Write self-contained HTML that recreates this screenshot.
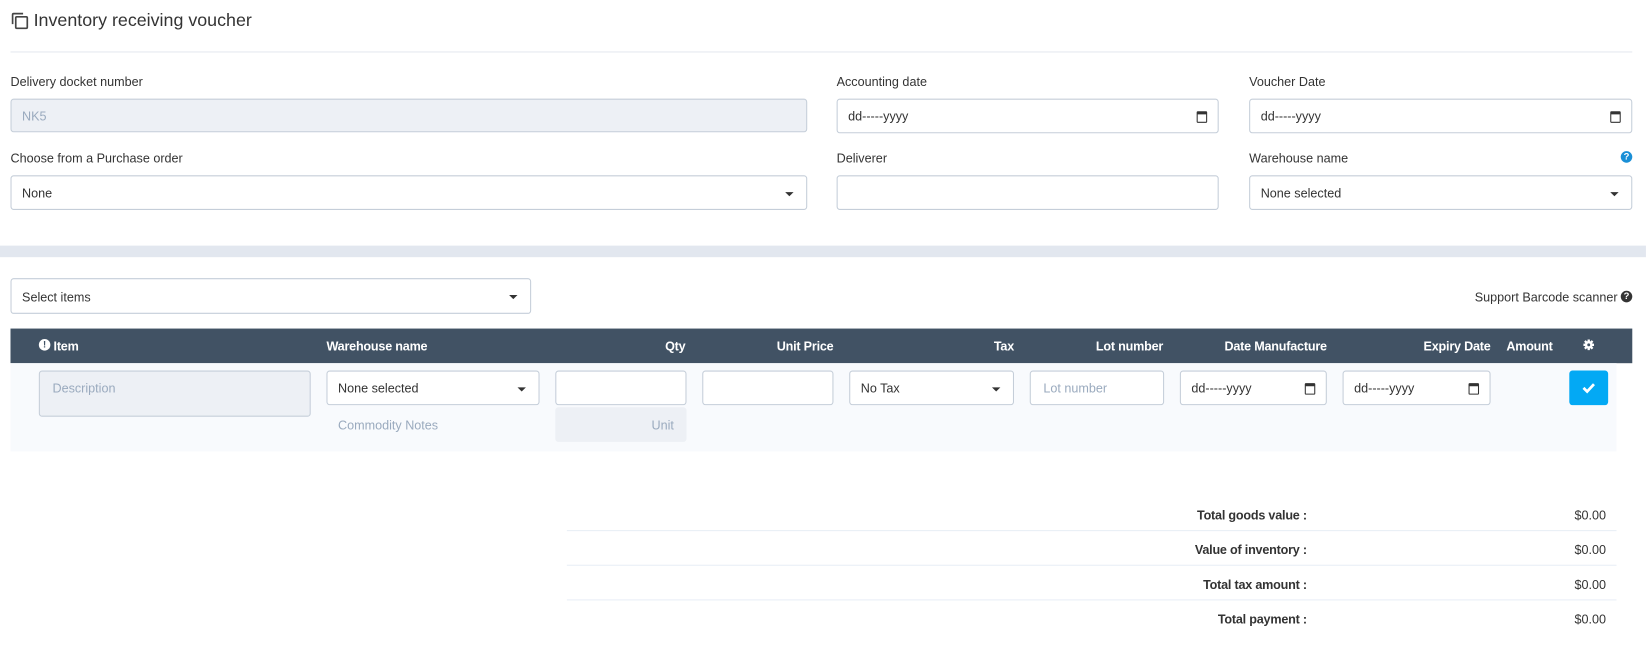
<!DOCTYPE html>
<html><head><meta charset="utf-8"><style>
html,body{margin:0;padding:0;background:#fff;width:1646px;height:667px;overflow:hidden}
#w{position:absolute;left:0;top:0;width:1568px;height:636px;transform:scale(1.0497);transform-origin:0 0;font-family:"Liberation Sans",sans-serif;font-size:12px;color:#333}
.a{position:absolute}
.in{position:absolute;box-sizing:border-box;border:1px solid #c5ced9;border-radius:3px;background:#fff;height:33px;line-height:33px;padding-left:10px;color:#333}
.dis{background:#edf0f5;color:#9aaabe}
.car{position:absolute;right:12px;top:15px;width:0;height:0;border-left:4px solid transparent;border-right:4px solid transparent;border-top:4px solid #333}
.cal{position:absolute;right:10px;top:11px;width:8px;height:7px;border:1.5px solid #333;border-top-width:3px;border-radius:1px}
.lbl{position:absolute;font-size:12px;color:#333}
.th{position:absolute;top:323px;color:#fff;font-weight:bold;font-size:12px;letter-spacing:-0.2px}
.tl{position:absolute;width:300px;text-align:right;font-weight:bold;color:#333;left:945px;letter-spacing:-0.2px}
.tv{position:absolute;width:100px;text-align:right;left:1430px;color:#333}
.ln{position:absolute;left:540px;width:1000px;height:1px;background:#e8eef6}
.ph{color:#9aaabe}
</style></head><body><div id="w">
<svg class="a" style="left:10px;top:11px" width="18" height="18" viewBox="0 0 18 18"><path d="M2 12V3a1 1 0 0 1 1-1h9" fill="none" stroke="#444" stroke-width="1.6"/><rect x="5" y="5" width="11" height="11" rx="1" fill="none" stroke="#444" stroke-width="1.6"/></svg>
<div class="a" style="left:32px;top:10px;font-size:17px;color:#333">Inventory receiving voucher</div>
<div class="a" style="left:10px;top:49px;width:1545px;height:1px;background:#e5e9ef"></div>

<div class="lbl" style="left:10px;top:71px">Delivery docket number</div>
<div class="in dis" style="left:10px;top:94px;width:759px;height:32px">NK5</div>
<div class="lbl" style="left:797px;top:71px">Accounting date</div>
<div class="in" style="left:797px;top:94px;width:364px">dd-----yyyy<span class="cal"></span></div>
<div class="lbl" style="left:1190px;top:71px">Voucher Date</div>
<div class="in" style="left:1190px;top:94px;width:365px">dd-----yyyy<span class="cal"></span></div>

<div class="lbl" style="left:10px;top:144px">Choose from a Purchase order</div>
<div class="in" style="left:10px;top:167px;width:759px">None<span class="car"></span></div>
<div class="lbl" style="left:797px;top:144px">Deliverer</div>
<div class="in" style="left:797px;top:167px;width:364px"></div>
<div class="lbl" style="left:1190px;top:144px">Warehouse name</div>
<div class="a" style="left:1544px;top:144px;width:11px;height:11px;border-radius:50%;background:#1a8fd6;color:#fff;font-size:9px;font-weight:bold;text-align:center;line-height:11px">?</div>
<div class="in" style="left:1190px;top:167px;width:365px">None selected<span class="car"></span></div>

<div class="a" style="left:0;top:234px;width:1568px;height:11px;background:#e2e7ef"></div>

<div class="in" style="left:10px;top:265px;width:496px;height:34px;line-height:34px">Select items<span class="car" style="top:15px"></span></div>
<div class="a" style="left:1300px;top:276px;width:241px;text-align:right">Support Barcode scanner</div>
<div class="a" style="left:1544px;top:277px;width:11px;height:11px;border-radius:50%;background:#333;color:#fff;font-size:9px;font-weight:bold;text-align:center;line-height:11px">?</div>

<div class="a" style="left:10px;top:313px;width:1545px;height:33px;background:#415264"></div>
<div class="a" style="left:37px;top:323px;width:11px;height:11px;border-radius:50%;background:#fff;color:#415264;font-size:9px;font-weight:bold;text-align:center;line-height:11px">!</div>
<div class="th" style="left:51px">Item</div>
<div class="th" style="left:311px">Warehouse name</div>
<div class="th" style="left:553px;width:100px;text-align:right">Qty</div>
<div class="th" style="left:644px;width:150px;text-align:right">Unit Price</div>
<div class="th" style="left:866px;width:100px;text-align:right">Tax</div>
<div class="th" style="left:958px;width:150px;text-align:right">Lot number</div>
<div class="th" style="left:1064px;width:200px;text-align:right">Date Manufacture</div>
<div class="th" style="left:1270px;width:150px;text-align:right">Expiry Date</div>
<div class="th" style="left:1435px">Amount</div>
<svg class="a" style="left:1508px;top:323px" width="11" height="11" viewBox="0 0 12 12"><circle cx="6" cy="6" r="4" fill="#fff"/><g stroke="#fff" stroke-width="2.4"><line x1="6" y1="0.5" x2="6" y2="11.5"/><line x1="0.5" y1="6" x2="11.5" y2="6"/><line x1="2" y1="2" x2="10" y2="10"/><line x1="10" y1="2" x2="2" y2="10"/></g><circle cx="6" cy="6" r="1.5" fill="#415264"/></svg>

<div class="a" style="left:10px;top:346px;width:1530px;height:84px;background:#f8fafd"></div>
<div class="in dis" style="left:37px;top:353px;width:259px;height:44px;line-height:32px;padding-left:12px">Description</div>
<div class="in" style="left:311px;top:353px;width:203px">None selected<span class="car"></span></div>
<div class="a ph" style="left:322px;top:398px">Commodity Notes</div>
<div class="in" style="left:529px;top:353px;width:125px"></div>
<div class="a" style="left:529px;top:388px;width:125px;height:33px;background:#edf0f5;border-radius:3px;box-sizing:border-box;text-align:right;padding-right:12px;line-height:35px;color:#9aaabe">Unit</div>
<div class="in" style="left:669px;top:353px;width:125px"></div>
<div class="in" style="left:809px;top:353px;width:157px">No Tax<span class="car"></span></div>
<div class="in ph" style="left:981px;top:353px;width:128px;padding-left:12px">Lot number</div>
<div class="in" style="left:1124px;top:353px;width:140px">dd-----yyyy<span class="cal"></span></div>
<div class="in" style="left:1279px;top:353px;width:141px">dd-----yyyy<span class="cal"></span></div>
<div class="a" style="left:1495px;top:353px;width:37px;height:33px;background:#03a9f4;border-radius:3px"><svg style="position:absolute;left:12px;top:11px" width="13" height="11" viewBox="0 0 13 11"><path d="M1.5 5.5l3.5 3.5 6.5-7" fill="none" stroke="#fff" stroke-width="2.6"/></svg></div>

<div class="tl" style="top:484px">Total goods value :</div><div class="tv" style="top:484px">$0.00</div>
<div class="ln" style="top:505px"></div>
<div class="tl" style="top:517px">Value of inventory :</div><div class="tv" style="top:517px">$0.00</div>
<div class="ln" style="top:538px"></div>
<div class="tl" style="top:550px">Total tax amount :</div><div class="tv" style="top:550px">$0.00</div>
<div class="ln" style="top:571px"></div>
<div class="tl" style="top:583px">Total payment :</div><div class="tv" style="top:583px">$0.00</div>
</div></body></html>
